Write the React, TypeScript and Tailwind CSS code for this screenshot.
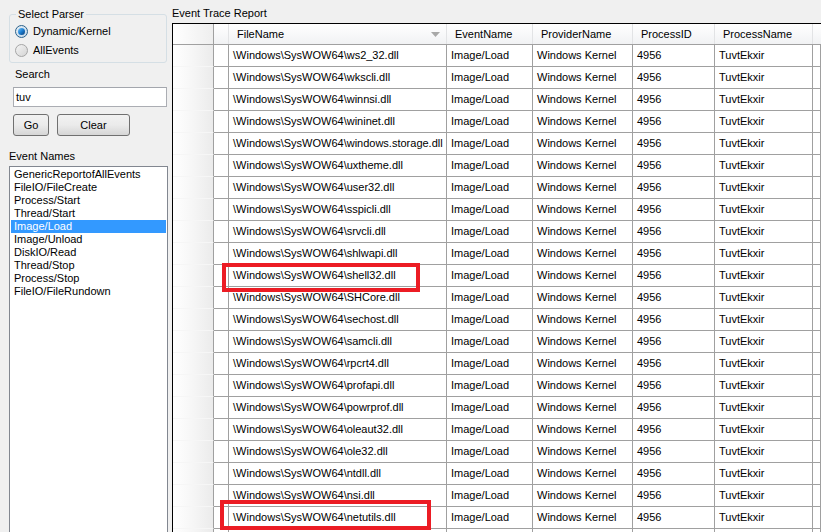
import React from 'react';

const files = [
  'ws2_32.dll',
  'wkscli.dll',
  'winnsi.dll',
  'wininet.dll',
  'windows.storage.dll',
  'uxtheme.dll',
  'user32.dll',
  'sspicli.dll',
  'srvcli.dll',
  'shlwapi.dll',
  'shell32.dll',
  'SHCore.dll',
  'sechost.dll',
  'samcli.dll',
  'rpcrt4.dll',
  'profapi.dll',
  'powrprof.dll',
  'oleaut32.dll',
  'ole32.dll',
  'ntdll.dll',
  'nsi.dll',
  'netutils.dll',
];

const eventNames = [
  'GenericReportofAllEvents',
  'FileIO/FileCreate',
  'Process/Start',
  'Thread/Start',
  'Image/Load',
  'Image/Unload',
  'DiskIO/Read',
  'Thread/Stop',
  'Process/Stop',
  'FileIO/FileRundown',
];

function Radio({ checked, label }: { checked?: boolean; label: string }) {
  return (
    <div className="flex items-center h-[19px] pl-[5px] gap-[5px]">
      <div
        className={`w-[13px] h-[13px] rounded-full border flex items-center justify-center ${
          checked
            ? 'border-[#2c628b] bg-gradient-to-br from-[#e6eef5] to-[#c5d9ea]'
            : 'border-[#a5a5a5] bg-gradient-to-br from-[#f4f4f4] to-[#d4d4d4]'
        }`}
      >
        {checked && (
          <div className="w-[7px] h-[7px] rounded-full bg-gradient-to-br from-[#6ec2f7] via-[#1c7ed1] to-[#0b3e78]" />
        )}
      </div>
      <span>{label}</span>
    </div>
  );
}

function Button({ label, width }: { label: string; width: string }) {
  return (
    <button
      className={`${width} h-[22px] border border-[#707070] rounded-[3px] bg-gradient-to-b from-[#f2f2f2] via-[#ebebeb] to-[#d6d6d6] text-[11px] text-black`}
    >
      {label}
    </button>
  );
}

const colW = {
  rh: 'w-[41px]',
  blank: 'w-[15px]',
  file: 'w-[218px]',
  evt: 'w-[86px]',
  prov: 'w-[100px]',
  pid: 'w-[82px]',
  pname: 'w-[98px]',
};

function HeaderRow() {
  const hcell =
    'shrink-0 h-full border-r border-[#e2e3e5] flex items-center pl-[8px] bg-gradient-to-b from-white to-[#f1f2f4]';
  return (
    <div className="flex h-[21px] border-b border-[#a0a0a0]">
      <div className={`${colW.rh} shrink-0 h-full border-r border-[#a0a0a0] bg-gradient-to-r from-white to-[#eeeeee]`} />
      <div className={`${colW.blank} ${hcell}`} />
      <div className={`${colW.file} ${hcell} justify-between pr-[6px]`}>
        <span>FileName</span>
        <svg width="9" height="5" viewBox="0 0 9 5">
          <path d="M0 0 L9 0 L4.5 5 Z" fill="#a8a8a8" />
        </svg>
      </div>
      <div className={`${colW.evt} ${hcell}`}>EventName</div>
      <div className={`${colW.prov} ${hcell}`}>ProviderName</div>
      <div className={`${colW.pid} ${hcell}`}>ProcessID</div>
      <div className={`${colW.pname} ${hcell}`}>ProcessName</div>
      <div className={`flex-1 ${hcell}`} />
    </div>
  );
}

// file === undefined renders the partly visible row below the fold
function DataRow({ file }: { file?: string }) {
  const cell = 'shrink-0 h-full border-r border-b border-[#a0a0a0] flex items-center pl-[4px] bg-white whitespace-nowrap overflow-hidden';
  return (
    <div className="flex h-[22px]">
      <div
        className={`${colW.rh} shrink-0 h-full border-r border-r-[#a0a0a0] border-b border-b-[#f6f6f6] bg-gradient-to-r from-white via-[#f6f6f6] to-[#ebebeb]`}
      />
      <div className={`${colW.blank} ${cell}`} />
      <div className={`${colW.file} ${cell}`}>{file ? '\\Windows\\SysWOW64\\' + file : ''}</div>
      <div className={`${colW.evt} ${cell}`}>{file ? 'Image/Load' : ''}</div>
      <div className={`${colW.prov} ${cell}`}>{file ? 'Windows Kernel' : ''}</div>
      <div className={`${colW.pid} ${cell}`}>{file ? '4956' : ''}</div>
      <div className={`${colW.pname} ${cell}`}>{file ? 'TuvtEkxir' : ''}</div>
      <div className={`flex-1 ${cell}`} />
    </div>
  );
}

export default function App() {
  return (
    <div
      className="relative w-[821px] h-[532px] overflow-hidden bg-[#f0f0f0] flex text-[11px] leading-[13px] text-black"
      style={{ fontFamily: '"Liberation Sans", Arial, sans-serif' }}
    >
      {/* left panel */}
      <div className="w-[172px] shrink-0">
        <fieldset className="mt-[8px] ml-[9px] w-[158px] border border-[#d5dfe5] rounded-[3px] pt-[1px] pb-[2px]">
          <legend className="ml-[6px] px-[2px] leading-[13px]">Select Parser</legend>
          <Radio checked label="Dynamic/Kernel" />
          <Radio label="AllEvents" />
        </fieldset>

        <div className="mt-[5px] ml-[15px]">Search</div>
        <div className="mt-[6px] ml-[13px] w-[154px] h-[20px] bg-white border border-[#abadb3] border-t-[#a3a6ad] flex items-center pl-[2px]">
          tuv
        </div>
        <div className="mt-[7px] ml-[13px] flex gap-[8px]">
          <Button label="Go" width="w-[36px]" />
          <Button label="Clear" width="w-[73px]" />
        </div>

        <div className="mt-[14px] ml-[9px]">Event Names</div>
        <div className="mt-[3px] ml-[9px] w-[159px] h-[400px] bg-white border border-[#828790] pt-[1px] px-[1px]">
          {eventNames.map((n) => (
            <div
              key={n}
              className={`h-[13px] pl-[3px] ${n === 'Image/Load' ? 'bg-[#3399ff] text-white' : ''}`}
            >
              {n}
            </div>
          ))}
        </div>
      </div>

      {/* right panel */}
      <div className="flex-1 flex flex-col min-w-0">
        <div className="mt-[7px]">Event Trace Report</div>
        <div className="mt-[3px] flex-1 border-l border-t border-black bg-[#ababab] overflow-hidden">
          <HeaderRow />
          {files.map((f) => (
            <DataRow key={f} file={f} />
          ))}
          <DataRow />
        </div>
      </div>

      {/* highlight boxes */}
      <div className="absolute left-[222px] top-[263px] w-[198px] h-[29px] border-[4px] border-[#ec1c24]" />
      <div className="absolute left-[220px] top-[500px] w-[211px] h-[30px] border-[4px] border-[#ec1c24]" />
    </div>
  );
}
